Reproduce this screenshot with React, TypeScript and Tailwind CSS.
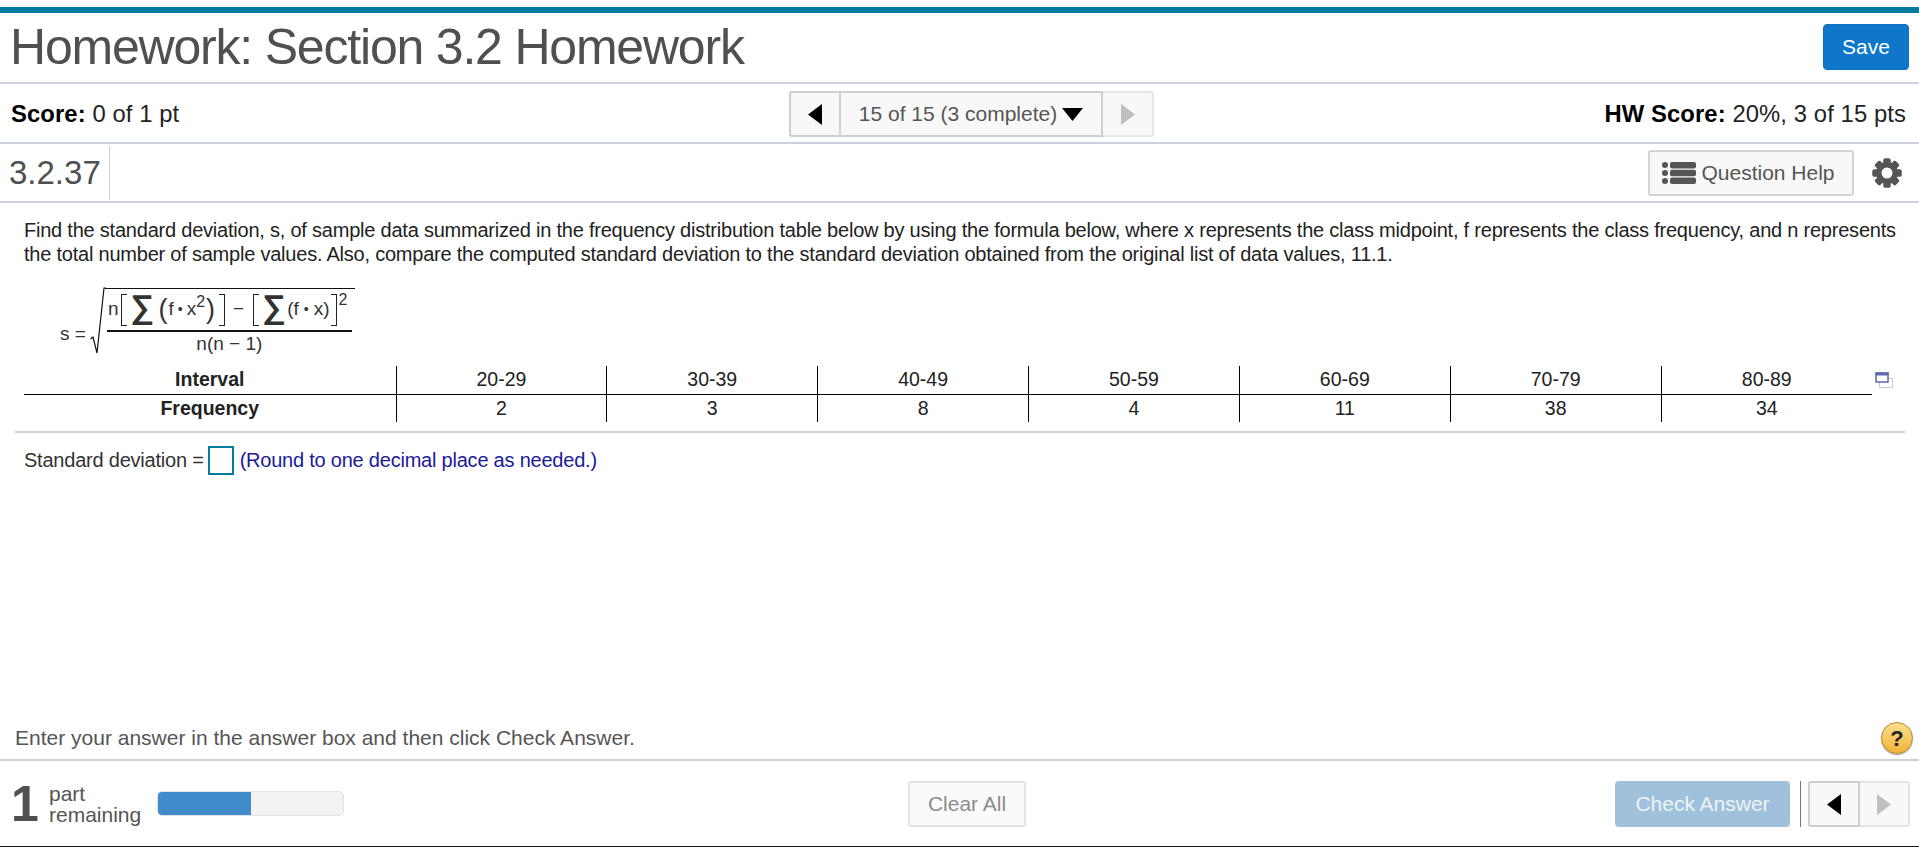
//--------------------------------------------------------------------//
// Constants

const intervals = ['20-29', '30-39', '40-49', '50-59', '60-69', '70-79', '80-89'];
const frequencies = ['2', '3', '8', '4', '11', '38', '34'];

//--------------------------------------------------------------------//
// Components

function Triangle({ dir, color }: { dir: 'left' | 'right' | 'down'; color: string }) {
  const points = {
    left: '14,0 14,21 0,10.5',
    right: '0,0 14,10.5 0,21',
    down: '0,0 21,0 10.5,13'
  }[dir];
  const box = dir === 'down' ? '0 0 21 13' : '0 0 14 21';
  return (
    <svg viewBox={box} className={dir === 'down' ? 'w-[21px] h-[13px]' : 'w-[14px] h-[21px]'}>
      <polygon points={points} fill={color} />
    </svg>
  );
}

function ListIcon() {
  return (
    <svg viewBox="0 0 34 22" className="w-[34px] h-[22px]" fill="#555">
      <circle cx="3" cy="3" r="3" />
      <circle cx="3" cy="11" r="3" />
      <circle cx="3" cy="19" r="3" />
      <rect x="8" y="0" width="26" height="6.5" rx="2" />
      <rect x="8" y="7.75" width="26" height="6.5" rx="2" />
      <rect x="8" y="15.5" width="26" height="6.5" rx="2" />
    </svg>
  );
}

function GearIcon() {
  return (
    <svg viewBox="0 0 30 30" className="w-[30px] h-[30px]">
      <g fill="#555">
        {[0, 45, 90, 135, 180, 225, 270, 315].map((a) => (
          <rect key={a} x="11.5" y="0.5" width="7" height="29" rx="1.5" transform={`rotate(${a} 15 15)`} />
        ))}
        <circle cx="15" cy="15" r="11" />
      </g>
      <circle cx="15" cy="15" r="5.5" fill="#fff" />
    </svg>
  );
}

function PopoutIcon() {
  return (
    <svg viewBox="0 0 18 16" className="w-[18px] h-[16px]" fill="none">
      <rect x="4.5" y="6.5" width="13" height="9" stroke="#c3c8e4" />
      <rect x="1" y="1" width="12" height="9" fill="#fff" stroke="#5c68b0" strokeWidth="1.5" />
      <rect x="0.5" y="0.5" width="13" height="3" fill="#5c68b0" />
    </svg>
  );
}

function BracketLeft() {
  return <span className="w-[6px] h-[32px] border-l border-y border-[#222] shrink-0" />;
}

function BracketRight() {
  return <span className="w-[6px] h-[32px] border-r border-y border-[#222] shrink-0" />;
}

function Sigma() {
  return <span className="text-[33px] leading-[32px] font-bold w-[22px] text-center shrink-0 -mt-[5px]">∑</span>;
}

function Formula() {
  return (
    <div className="flex items-center h-[68px] ml-[60px] text-[#333]">
      <span className="text-[19px] mr-[4px] mt-[27px]">s =</span>
      <svg viewBox="0 0 16 68" className="w-[16px] h-[68px] shrink-0" fill="none">
        <path d="M0.5 52 L3 50 L7 66 L14 1 L16 1" stroke="#111" strokeWidth="1.2" />
      </svg>
      <div className="mt-[1px] w-[250px] border-t border-t-[#111] h-[67px] -ml-[1px]">
        <div className="flex items-center ml-[2px] w-[245px] h-[43px] border-b-2 border-b-[#111] text-[19px] whitespace-nowrap">
          <span className="ml-[1px]">n</span>
          <span className="ml-[3px] flex"><BracketLeft /></span>
          <span className="ml-[3px] flex"><Sigma /></span>
          <span className="text-[27px] ml-[6px] font-light">(</span>
          <span className="ml-[1px]">f</span>
          <span className="mx-[4px] text-[14px]">•</span>
          <span>x<sup className="text-[16px] -top-[8px]">2</sup></span>
          <span className="text-[27px] ml-[1px]">)</span>
          <span className="ml-[4px] flex"><BracketRight /></span>
          <span className="ml-[8px] mr-[9px]">−</span>
          <BracketLeft />
          <span className="ml-[3px] flex"><Sigma /></span>
          <span className="ml-[3px]">(f</span>
          <span className="mx-[5px] text-[14px]">•</span>
          <span>x)</span>
          <span className="ml-[1px] flex"><BracketRight /></span>
          <span className="text-[16px] -mt-[19px] ml-[2px]">2</span>
        </div>
        <div className="text-center w-[245px] ml-[2px] text-[19px] leading-[24px]">n(n − 1)</div>
      </div>
    </div>
  );
}

function FreqTable() {
  return (
    <div className="flex items-start pl-[24px] mt-[11px]">
      <table className="table-fixed w-[1848px] border-collapse text-[19.5px] text-[#222]">
        <tbody>
          <tr className="border-b border-b-black h-[28px]">
            <th className="w-[372px] font-bold border-r border-r-black leading-[27px]">Interval</th>
            {intervals.map((v, i) => (
              <td key={v} className={i < 6 ? 'text-center font-normal border-r border-r-black leading-[27px]' : 'text-center leading-[27px]'}>{v}</td>
            ))}
          </tr>
          <tr className="h-[28px]">
            <th className="font-bold border-r border-r-black leading-[27px]">Frequency</th>
            {frequencies.map((v, i) => (
              <td key={i} className={i < 6 ? 'text-center border-r border-r-black leading-[27px]' : 'text-center leading-[27px]'}>{v}</td>
            ))}
          </tr>
        </tbody>
      </table>
      <div className="ml-[3px] mt-[6px]">
        <PopoutIcon />
      </div>
    </div>
  );
}

function Pager({ className }: { className: string }) {
  return (
    <div className={'flex h-[46px] rounded-[3px] bg-[#f8f8f8] ' + className}>
      <div className="w-[52px] flex items-center justify-center border-2 border-[#cfcfcf] rounded-l-[3px]">
        <Triangle dir="left" color="#000" />
      </div>
      <div className="w-[50px] flex items-center justify-center border-2 border-l-0 border-[#e4e4e4] rounded-r-[3px]">
        <Triangle dir="right" color="#bfbfbf" />
      </div>
    </div>
  );
}

export default function App() {
  return (
    <div className="w-[1919px] h-[847px] overflow-hidden bg-white flex flex-col font-['Liberation_Sans',Arial,sans-serif]">
      <div className="h-[7px] shrink-0" />
      <div className="h-[6px] shrink-0 bg-[#047ca0]" />

      {/* title */}
      <header className="h-[69px] shrink-0 flex items-center justify-between pl-[10px] pr-[10px]">
        <h1 className="text-[50px] leading-none text-[#505050] -mt-[2px] tracking-[-1.2px]">Homework: Section 3.2 Homework</h1>
        <button className="w-[86px] h-[46px] -mt-[2px] rounded-[4px] bg-[#0e77ca] border border-[#0d6fbd] text-white text-[21px]">Save</button>
      </header>

      {/* score */}
      <div className="h-[60px] shrink-0 border-t-2 border-t-[#cdd1de] flex items-center justify-between pl-[11px] pr-[13px] relative">
        <div className="text-[23.8px] text-black tracking-[0.1px] mt-[2px]"><b>Score:</b> <span className="text-[#222]">0 of 1 pt</span></div>
        <div className="absolute left-[789px] top-[7px] flex h-[46px] rounded-[3px] bg-[#f8f8f8]">
          <div className="w-[52px] flex items-center justify-center border-2 border-[#cfcfcf] rounded-l-[3px]">
            <Triangle dir="left" color="#000" />
          </div>
          <div className="w-[262px] flex items-center justify-center gap-[5px] border-y-2 border-r-2 border-[#cfcfcf] text-[21px] text-[#555]">
            15 of 15 (3 complete)
            <Triangle dir="down" color="#000" />
          </div>
          <div className="w-[51px] flex items-center justify-center border-y-2 border-r-2 border-[#e6e6e6] rounded-r-[3px]">
            <Triangle dir="right" color="#bfbfbf" />
          </div>
        </div>
        <div className="text-[23.8px] text-black tracking-[0.1px] mt-[2px]"><b>HW Score:</b> <span className="text-[#222]">20%, 3 of 15 pts</span></div>
      </div>

      {/* question id */}
      <div className="h-[59px] shrink-0 border-t-2 border-t-[#cdd1de] flex items-center justify-between pr-[17px]">
        <div className="h-[54px] w-[110px] border-r border-r-[#cdd1de] pl-[9px] flex items-center text-[33px] text-[#505050]">3.2.37</div>
        <div className="flex items-center gap-[18px]">
          <button className="w-[206px] h-[46px] rounded-[3px] border-2 border-[#d4d4d4] bg-[#f8f8f8] flex items-center justify-center gap-[5px] pr-[5px] text-[21px] text-[#555]">
            <ListIcon />
            Question Help
          </button>
          <GearIcon />
        </div>
      </div>

      {/* question body */}
      <main className="flex-1 border-t-2 border-t-[#cdd1de] flex flex-col min-h-0">
        <p className="pt-[15px] pl-[24px] pr-[10px] text-[20px] leading-[24px] text-[#222] tracking-[-0.22px]">
          Find the standard deviation, s, of sample data summarized in the frequency distribution table below by using the formula below, where x represents the class midpoint, f represents the class frequency, and n represents the total number of sample values. Also, compare the computed standard deviation to the standard deviation obtained from the original list of data values, 11.1.
        </p>
        <div className="mt-[21px]"><Formula /></div>
        <FreqTable />
        <div className="h-[2px] bg-[#cdd1de] ml-[15px] mr-[14px] mt-[9px] shrink-0" />
        <div className="flex items-center pl-[24px] mt-[12px] text-[20px] tracking-[-0.22px]">
          <span className="text-[#333]">Standard deviation =</span>
          <span className="w-[26px] h-[29px] border-2 border-[#047ca0] ml-[4px] mr-[6px]" />
          <span className="text-[#1b1b96]">(Round to one decimal place as needed.)</span>
        </div>
        <div className="flex-1" />
        <div className="flex items-center justify-between h-[42px] pl-[15px] pr-[6px] shrink-0">
          <span className="text-[21px] text-[#555]">Enter your answer in the answer box and then click Check Answer.</span>
          <span className="w-[32px] h-[32px] rounded-full border border-[#b88a2a] bg-gradient-to-b from-[#fde08a] to-[#f0b236] flex items-center justify-center text-[22px] font-bold text-[#222] shadow-[0_1px_1px_#999]">?</span>
        </div>
      </main>

      {/* footer */}
      <footer className="h-[88px] shrink-0 border-t-2 border-t-[#cdd1de] border-b border-b-[#111] flex items-center relative pl-[11px]">
        <span className="text-[50px] font-bold text-[#505050] leading-none w-[38px]">1</span>
        <span className="text-[21px] leading-[21px] text-[#555] w-[108px]">part<br />remaining</span>
        <div className="w-[187px] h-[25px] rounded-[5px] bg-[#f3f3f3] border border-[#e2e2e2] overflow-hidden">
          <div className="h-full w-[93px] bg-[#428bca]" />
        </div>
        <button className="absolute left-[908px] top-[20px] w-[118px] h-[46px] rounded-[3px] border-2 border-[#e3e3e3] bg-[#fafafa] text-[21px] text-[#8c8c8c]">Clear All</button>
        <button className="absolute left-[1615px] top-[20px] w-[175px] h-[46px] rounded-[4px] bg-[#9fc1dc] text-[21px] text-[#eef4f9]">Check Answer</button>
        <div className="absolute left-[1800px] top-[20px] h-[46px] w-px bg-[#777]" />
        <Pager className="absolute left-[1808px] top-[20px]" />
      </footer>
    </div>
  );
}
